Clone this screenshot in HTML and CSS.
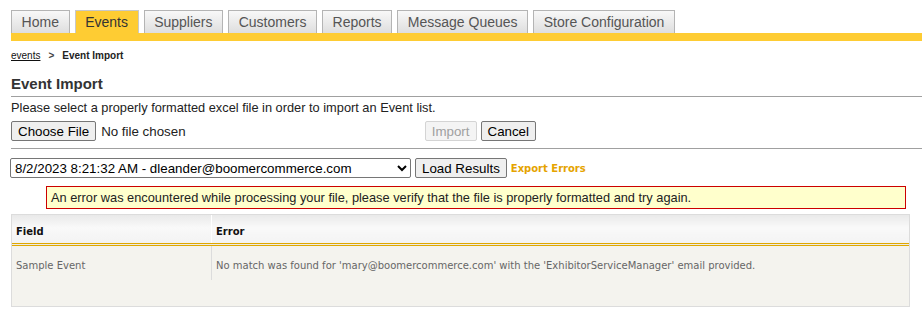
FILE: index.html
```html
<!DOCTYPE html>
<html lang="en">
<head>
    <meta charset="UTF-8">
    <title>Event Import</title>
    <link rel="stylesheet" href="styles.css">
</head>
<body>
    <div class="nav">
        <a class="tab" href="#">Home</a>
        <a class="tab active" href="#">Events</a>
        <a class="tab" href="#">Suppliers</a>
        <a class="tab" href="#">Customers</a>
        <a class="tab" href="#">Reports</a>
        <a class="tab" href="#">Message Queues</a>
        <a class="tab" href="#">Store Configuration</a>
    </div>
    <div class="content">
        <div class="crumbs"><a href="#">events</a><span class="sep">&gt;</span><b>Event Import</b></div>
        <h2 class="heading">Event Import</h2>
        <p class="intro">Please select a properly formatted excel file in order to import an Event list.</p>
        <div class="upload">
            <div class="file">
                <button class="btn">Choose File</button>
                <span class="nofile">No file chosen</span>
            </div>
            <div class="actions">
                <button class="btn" disabled>Import</button>
                <button class="btn">Cancel</button>
            </div>
        </div>
        <div class="results">
            <select class="runs">
                <option>8/2/2023 8:21:32 AM - dleander@boomercommerce.com</option>
            </select>
            <button class="btn">Load Results</button>
            <a class="export" href="#">Export Errors</a>
        </div>
        <div class="error">An error was encountered while processing your file, please verify that the file is properly formatted and try again.</div>
        <div class="grid">
            <table>
                <thead>
                    <tr><th class="col-field">Field</th><th>Error</th></tr>
                </thead>
                <tbody>
                    <tr>
                        <td class="col-field">Sample Event</td>
                        <td>No match was found for 'mary@boomercommerce.com' with the 'ExhibitorServiceManager' email provided.</td>
                    </tr>
                </tbody>
            </table>
        </div>
    </div>
</body>
</html>
```

FILE: styles.css
```css
body {
    margin: 0;
    font-family: "Liberation Sans", Arial, sans-serif;
    color: #222;
    background: #fff;
}
.nav {
    display: flex;
    gap: 5px;
    margin: 10px 0 0 11px;
    border-bottom: 8px solid #fecc33;
}
.tab {
    display: block;
    height: 22px;
    line-height: 22px;
    padding: 0 9.6px;
    font-size: 14px;
    color: #555;
    text-decoration: none;
    border: 1px solid #b4b4b4;
    border-bottom: none;
    background: linear-gradient(#f8f8f8, #dedede);
}
.tab.active {
    background: #fecc33;
    color: #333;
    border-color: #c8c8c8;
}
.content {
    padding-left: 11px;
}
.crumbs {
    margin-top: 9px;
    font-size: 10px;
    line-height: 12px;
    color: #222;
}
.crumbs a {
    color: #111;
}
.crumbs .sep {
    margin: 0 8px;
    font-weight: bold;
    color: #444;
}
.heading {
    margin: 13px 0 0;
    font-size: 15px;
    line-height: 18px;
    padding-bottom: 3px;
    border-bottom: 1px solid #a0a0a0;
    color: #333;
}
.intro {
    margin: 3px 0 0;
    font-size: 12.8px;
    line-height: 15px;
}
.upload {
    display: flex;
    justify-content: space-between;
    align-items: center;
    width: 525px;
    margin-top: 6px;
    padding-bottom: 7px;
}
.file, .actions {
    display: flex;
    align-items: center;
    gap: 4px;
}
.nofile {
    font-size: 13.33px;
    margin-left: 1px;
}
.btn {
    height: 20px;
    padding: 0 6px;
    font-family: "Liberation Sans", Arial, sans-serif;
    font-size: 13.33px;
    color: #000;
    background: #efefef;
    border: 1px solid #767676;
    border-radius: 2px;
}
.btn:disabled {
    color: #a0a0a0;
    background: #f4f4f4;
    border-color: #d4d4d4;
}
.results {
    display: flex;
    align-items: center;
    gap: 4px;
    border-top: 1px solid #a0a0a0;
    padding-top: 9px;
}
.runs {
    width: 401px;
    height: 20px;
    margin-left: -1px;
    font-family: "Liberation Sans", Arial, sans-serif;
    font-size: 13.33px;
    color: #000;
    background: #fff;
    border: 1px solid #767676;
    border-radius: 2px;
}
.export {
    font-family: "DejaVu Sans", Verdana, sans-serif;
    font-size: 10px;
    font-weight: bold;
    color: #e5a300;
    text-decoration: none;
}
.error {
    margin: 8px 0 0 35px;
    width: 854px;
    height: 21px;
    line-height: 21px;
    padding-left: 4px;
    font-size: 12.8px;
    color: #222;
    background: #ffffcc;
    border: 1px solid #cc0000;
}
.grid {
    margin-top: 5px;
    width: 897px;
    padding-bottom: 26px;
    background: #f4f3ee;
    border: 1px solid #dcdcdc;
}
.grid table {
    width: 100%;
    border-collapse: collapse;
    font-family: "DejaVu Sans", Verdana, sans-serif;
    font-size: 10px;
}
.grid th {
    height: 23px;
    padding: 5px 4px 0;
    text-align: left;
    color: #111;
    background: linear-gradient(#e9e9e9, #f9f9f9 45%, #f3f3f3);
    border-bottom: 3px double #e0a800;
}
.grid th.col-field {
    border-right: 1px solid #fff;
}
.grid td {
    height: 30px;
    padding: 4px 4px 0;
    color: #666;
    border-top: 3px solid #e6e4dc;
}
.grid td.col-field {
    width: 191px;
    border-right: 1px solid #dcdcdc;
}
```
